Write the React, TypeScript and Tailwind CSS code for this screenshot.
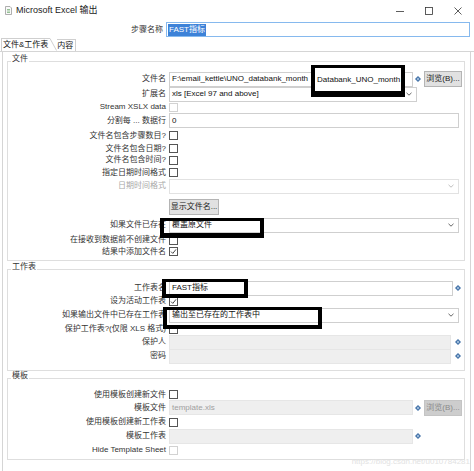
import type { ReactNode } from 'react'

function Diamond() {
  return (
    <svg width="6" height="6" viewBox="0 0 6 6" className="shrink-0">
      <path d="M3 0 L6 3 L3 6 L0 3 Z" fill="#3f6fa6" />
      <path d="M3 1.6 L4.4 3 L3 4.4 L1.6 3 Z" fill="#a9c3e0" />
    </svg>
  )
}

function Chevron({ light }: { light?: boolean }) {
  return (
    <svg width="6" height="4" viewBox="0 0 6 4" className="shrink-0">
      <path d="M0.5 0.8 L3 3.2 L5.5 0.8" fill="none" stroke={light ? '#b8b8b8' : '#555'} strokeWidth="0.9" />
    </svg>
  )
}

function Check({ checked, light }: { checked?: boolean; light?: boolean }) {
  return (
    <span
      className={`flex w-[9px] h-[9px] items-center justify-center border bg-white ${light ? 'border-[#d2d2d2]' : 'border-[#555]'}`}
    >
      {checked && (
        <svg width="7" height="7" viewBox="0 0 7 7">
          <path d="M1 3.6 L2.8 5.4 L6 1.4" fill="none" stroke="#333" strokeWidth="0.9" />
        </svg>
      )}
    </span>
  )
}

function Row({ label, h, children, grey }: { label: string; h: string; children?: ReactNode; grey?: boolean }) {
  return (
    <div className={`flex items-center ${h}`}>
      <div className={`w-[158px] shrink-0 text-right whitespace-nowrap ${grey ? 'text-[#a8a8a8]' : 'text-[#333]'}`}>
        {label}
      </div>
      <div className="ml-[3px] flex items-center">{children}</div>
    </div>
  )
}

function Box({ w, disabled, children }: { w: string; disabled?: boolean; children?: ReactNode }) {
  return (
    <div
      className={`flex items-center h-[15px] px-[2px] border whitespace-nowrap overflow-hidden ${w} ${disabled ? 'bg-[#efefef] border-[#e6e6e6] text-[#a0a0a0]' : 'bg-white border-[#cfcfcf] text-[#111]'}`}
    >
      {children}
    </div>
  )
}

function Select({ w, value, light }: { w: string; value?: string; light?: boolean }) {
  return (
    <div
      className={`flex items-center justify-between h-[15px] pl-[2px] pr-[4px] border bg-white whitespace-nowrap ${w} ${light ? 'border-[#e2e2e2]' : 'border-[#cfcfcf]'}`}
    >
      <span className="text-[#111]">{value}</span>
      <Chevron light={light} />
    </div>
  )
}

function Browse({ disabled }: { disabled?: boolean }) {
  return (
    <div
      className={`flex items-center justify-center w-[38px] h-[16px] border ${disabled ? 'bg-[#cdcdcd] border-[#c4c4c4] text-[#8a8a8a]' : 'bg-[#e1e1e1] border-[#b4b4b4] text-[#222]'}`}
    >
      浏览(B)...
    </div>
  )
}

function Group({ title, children, className }: { title: string; children: ReactNode; className: string }) {
  return (
    <div className={`relative border border-[#dedede] ${className}`}>
      <span className="absolute -top-[7px] left-[3px] bg-white px-[1px] text-[#333]">{title}</span>
      {children}
    </div>
  )
}

export default function App() {
  return (
    <div
      className="relative w-[474px] h-[471px] overflow-hidden bg-white text-[8px] leading-none text-[#222]"
      style={{ fontFamily: '"Liberation Sans", "Noto Sans CJK SC", sans-serif' }}
    >
      {/* title bar */}
      <div className="flex items-center h-[21px] pl-[5px]">
        <svg width="7" height="9" viewBox="0 0 7 9" className="shrink-0">
          <path d="M0.5 0.5 H5 L6.5 2 V8.5 H0.5 Z" fill="#fafafa" stroke="#9a9a9a" strokeWidth="0.8" />
          <path d="M2 3.5 H5 M2 5 H5 M2 6.5 H5" stroke="#6aa86a" strokeWidth="0.7" />
        </svg>
        <span className="ml-[4px] text-[9px] text-[#222]">Microsoft Excel 输出</span>
        <div className="ml-auto flex items-center gap-[21px] pr-[12px]">
          <svg width="8" height="8" viewBox="0 0 8 8">
            <path d="M0 4.5 H8" stroke="#333" strokeWidth="0.8" />
          </svg>
          <svg width="8" height="8" viewBox="0 0 8 8">
            <rect x="0.5" y="0.5" width="7" height="7" fill="none" stroke="#333" strokeWidth="0.8" />
          </svg>
          <svg width="8" height="8" viewBox="0 0 8 8">
            <path d="M0.5 0.5 L7.5 7.5 M7.5 0.5 L0.5 7.5" stroke="#333" strokeWidth="0.8" />
          </svg>
        </div>
      </div>

      {/* step name */}
      <div className="flex items-center h-[17px]">
        <div className="w-[163px] text-right text-[#333]">步骤名称</div>
        <div className="ml-[3px] flex items-center w-[304px] h-[15px] border border-[#86b9ee] bg-white px-[1px]">
          <span className="bg-[#3d82d8] text-white px-[1px] py-[2px]">FAST指标</span>
        </div>
      </div>

      {/* tabs */}
      <div className="flex items-end h-[14px] pl-[1px] border-b border-[#d5d5d5]">
        <div className="flex items-center h-[13px] pl-[1px] pr-[2px] border-l border-t border-[#cfcfcf] bg-white text-[#111]">
          文件&amp;工作表
        </div>
        <svg width="7" height="13" viewBox="0 0 7 13" className="shrink-0">
          <path d="M0 0.5 L6.5 12.5" stroke="#cfcfcf" strokeWidth="1" />
        </svg>
        <div className="flex items-center h-[12px] pr-[2px] border-t border-r border-[#cfcfcf] text-[#111]">
          内容
        </div>
      </div>

      {/* tab panel */}
      <div className="ml-[2px] mr-[3px] h-[420px] border-x border-[#d5d5d5] pl-[4px] pr-[5px] pt-[9px]">
        <Group title="文件" className="pt-[9px] pb-[3px]">
          <Row label="文件名" h="h-[16px]">
            <Box w="w-[244px]">
              <span>F:\email_kettle\UNO_databank_month</span>
            </Box>
            <span className="ml-[2px] mr-[3px]">
              <Diamond />
            </span>
            <Browse />
          </Row>
          <Row label="扩展名" h="h-[14px]">
            <Select w="w-[248px]" value="xls [Excel 97 and above]" />
          </Row>
          <Row label="Stream XSLX data" h="h-[12px]">
            <Check light />
          </Row>
          <Row label="分割每 ... 数据行" h="h-[15px]">
            <Box w="w-[290px]">0</Box>
          </Row>
          <Row label="文件名包含步骤数目?" h="h-[15px]">
            <Check />
          </Row>
          <Row label="文件名包含日期?" h="h-[11px]">
            <Check />
          </Row>
          <Row label="文件名包含时间?" h="h-[12px]">
            <Check />
          </Row>
          <Row label="指定日期时间格式" h="h-[13px]">
            <Check />
          </Row>
          <Row label="日期时间格式" h="h-[14px]" grey>
            <Select w="w-[290px]" light />
          </Row>
          <div className="flex items-end h-[23px] pl-[161px] pb-[1px]">
            <div className="flex items-center justify-center w-[50px] h-[16px] border border-[#b4b4b4] bg-[#e1e1e1] text-[#222]">
              显示文件名...
            </div>
          </div>
          <Row label="如果文件已存在" h="h-[18px]">
            <Select w="w-[290px]" value="覆盖原文件" />
          </Row>
          <Row label="在接收到数据前不创建文件" h="h-[12px]">
            <Check />
          </Row>
          <Row label="结果中添加文件名" h="h-[11px]">
            <Check checked />
          </Row>
        </Group>

        <Group title="工作表" className="mt-[8px] pt-[11px] pb-[7px]">
          <Row label="工作表名" h="h-[14px]">
            <Box w="w-[284px]">FAST指标</Box>
            <span className="ml-[2px]">
              <Diamond />
            </span>
          </Row>
          <Row label="设为活动工作表" h="h-[12px]">
            <Check checked />
          </Row>
          <Row label="如果输出文件中已存在工作表" h="h-[16px]">
            <Select w="w-[290px]" value="输出至已存在的工作表中" />
          </Row>
          <Row label="保护工作表?(仅限 XLS 格式)" h="h-[12px]">
            <Check />
          </Row>
          <Row label="保护人" h="h-[14px]">
            <Box w="w-[282px]" disabled />
            <span className="ml-[4px]">
              <Diamond />
            </span>
          </Row>
          <Row label="密码" h="h-[14px]">
            <Box w="w-[282px]" disabled />
            <span className="ml-[4px]">
              <Diamond />
            </span>
          </Row>
        </Group>

        <Group title="模板" className="mt-[7px] pt-[10px] pb-[2px]">
          <Row label="使用模板创建新文件" h="h-[11px]">
            <Check />
          </Row>
          <Row label="模板文件" h="h-[15px]">
            <Box w="w-[244px]" disabled>
              template.xls
            </Box>
            <span className="ml-[2px] mr-[3px]">
              <Diamond />
            </span>
            <Browse disabled />
          </Row>
          <Row label="使用模板创建新工作表" h="h-[14px]">
            <Check />
          </Row>
          <Row label="模板工作表" h="h-[14px]">
            <Box w="w-[244px]" disabled />
            <span className="ml-[2px]">
              <Diamond />
            </span>
          </Row>
          <Row label="Hide Template Sheet" h="h-[14px]">
            <Check light />
          </Row>
        </Group>
      </div>

      {/* annotation frames */}
      <div className="absolute left-[311px] top-[65px] w-[94px] h-[32px] border-t-[3px] border-x-[4px] border-b-[6px] border-black bg-white flex items-center pl-[2px] text-[#111]">
        Databank_UNO_month
      </div>
      <div className="absolute left-[160px] top-[218px] w-[104px] h-[20px] border-t-[3px] border-x-[4px] border-b-[5px] border-black" />
      <div className="absolute left-[162px] top-[279px] w-[86px] h-[19px] border-t-[3px] border-x-[4px] border-b-[4px] border-black" />
      <div className="absolute left-[163px] top-[307px] w-[159px] h-[22px] border-t-[3px] border-x-[4px] border-b-[4px] border-black" />

      {/* watermark */}
      <div className="absolute right-[4px] top-[458px] text-[8px] text-[#e2e2e2]">https://blog.csdn.net/u010784281</div>
    </div>
  )
}
